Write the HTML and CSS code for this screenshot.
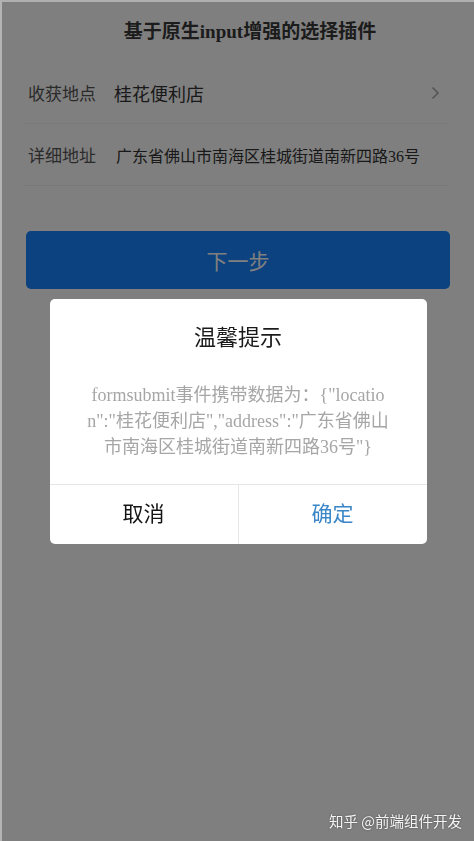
FILE: index.html
```html
<!doctype html>
<html>

<head>
    <meta charset="UTF-8">
    <title>选择插件</title>
    <link rel="stylesheet" href="styles.css">
</head>

<body>
    <div class="page">
        <h1 class="title">基于原生input增强的选择插件</h1>
        <form class="form">
            <div class="cell">
                <label class="cell-label">收获地点</label>
                <div class="cell-value">桂花便利店</div>
                <svg class="cell-arrow" width="9" height="14" viewBox="0 0 9 14">
                    <polyline points="1.5,1.5 7,7 1.5,12.5" fill="none" stroke="#aaa" stroke-width="1.6" />
                </svg>
            </div>
            <div class="cell">
                <label class="cell-label">详细地址</label>
                <div class="cell-value cell-value-sm">广东省佛山市南海区桂城街道南新四路36号</div>
            </div>
            <button class="btn-next" type="button">下一步</button>
        </form>
    </div>

    <!-- 提交后的提示弹窗 -->
    <div class="mask">
        <div class="dialog">
            <div class="dialog-title">温馨提示</div>
            <div class="dialog-body">formsubmit事件携带数据为：{"location":"桂花便利店","address":"广东省佛山市南海区桂城街道南新四路36号"}</div>
            <div class="dialog-footer">
                <a class="dialog-btn">取消</a>
                <a class="dialog-btn dialog-btn-ok">确定</a>
            </div>
        </div>
    </div>

    <div class="watermark">知乎 @前端组件开发</div>
</body>

</html>
```

FILE: styles.css
```css
* {
    margin: 0;
    padding: 0;
    box-sizing: border-box;
}

html,
body {
    height: 100%;
    overflow: hidden;
}

body {
    background-color: #fff;
    border-left: 2px solid #b4b4b4;
    border-top: 2px solid #b0b0b0;
    font-family: "Liberation Serif", "Noto Sans CJK SC", serif;
}

.title {
    height: 60px;
    line-height: 60px;
    padding-left: 24px;
    text-align: center;
    font-size: 19px;
    font-weight: bold;
    color: #383838;
}

.cell {
    display: flex;
    align-items: center;
    height: 62px;
    margin: 0 26px 0 23px;
    padding: 0 8px 0 3px;
    border-bottom: 1px solid #f0f0f0;
}

.cell-label {
    width: 86px;
    flex-shrink: 0;
    font-size: 17px;
    color: #555;
}

.cell-value {
    flex: 1;
    font-size: 18px;
    color: #333;
    white-space: nowrap;
}

.cell-value-sm {
    font-size: 16px;
    padding-left: 2px;
}

.cell-arrow {
    display: block;
}

.btn-next {
    display: block;
    width: calc(100% - 48px);
    height: 58px;
    margin: 45px 24px 0;
    border: none;
    border-radius: 5px;
    background-color: #1684ff;
    color: #fff;
    font: 21px "Liberation Serif", "Noto Sans CJK SC", serif;
}

.mask {
    position: fixed;
    top: 2px;
    left: 2px;
    right: 0;
    bottom: 0;
    background-color: rgba(0, 0, 0, 0.5);
    display: flex;
    align-items: center;
    justify-content: center;
}

.dialog {
    width: 377px;
    background-color: #fff;
    border-radius: 5px;
    text-align: center;
    overflow: hidden;
}

.dialog-title {
    padding-top: 25px;
    line-height: 28px;
    font-size: 22px;
    color: #1a1a1a;
}

.dialog-body {
    width: 304px;
    margin: 30px auto 24px;
    font-size: 18px;
    line-height: 26px;
    color: #a6a6a6;
    word-break: break-all;
}

.dialog-footer {
    display: flex;
    border-top: 1px solid #e6e6e6;
}

.dialog-btn {
    flex: 1;
    height: 59px;
    line-height: 59px;
    font-size: 21px;
    color: #141414;
    cursor: pointer;
}

.dialog-btn+.dialog-btn {
    border-left: 1px solid #e6e6e6;
}

.dialog-btn-ok {
    color: #3a86c8;
}

.watermark {
    position: fixed;
    right: 12px;
    bottom: 11px;
    font: 14.5px/18px "Noto Sans CJK SC", sans-serif;
    color: #f4f4f4;
    text-shadow: 0 0 2px rgba(0, 0, 0, 0.45);
}
```
